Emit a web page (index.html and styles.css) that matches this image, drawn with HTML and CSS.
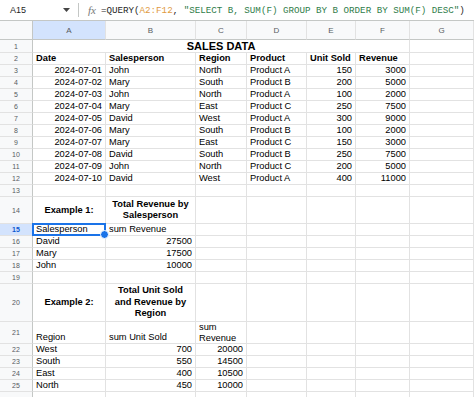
FILE: index.html
```html
<!DOCTYPE html>
<html lang="en">

<head>
  <meta charset="UTF-8" />
  <meta name="viewport" content="width=device-width, initial-scale=1.0" />
  <title>Sales Data - QUERY</title>
  <link rel="stylesheet" href="styles.css">
</head>

<body>
  <!-- Formula bar -->
  <div class="formula-bar">
    <span class="name-box">A15</span>
    <svg class="caret" width="7" height="4" viewBox="0 0 7 4"><path d="M0 0h7L3.5 4z" fill="#444" /></svg>
    <span class="divider"></span>
    <span class="fx">fx</span>
    <span class="formula">=QUERY(<span class="ref">A2:F12</span>, <span class="str">"SELECT B, SUM(F) GROUP BY B ORDER BY SUM(F) DESC"</span>)</span>
  </div>

  <!-- Grid -->
  <div class="sheet">
    <div class="corner"></div>
    <div class="head sel">A</div>
    <div class="head">B</div>
    <div class="head">C</div>
    <div class="head">D</div>
    <div class="head">E</div>
    <div class="head">F</div>
    <div class="head">G</div>

    <div class="rh">1</div>
    <div class="c title">SALES DATA</div>
    <div class="c"></div>

    <div class="rh">2</div>
    <div class="c b">Date</div>
    <div class="c b">Salesperson</div>
    <div class="c b">Region</div>
    <div class="c b">Product</div>
    <div class="c b">Unit Sold</div>
    <div class="c b">Revenue</div>
    <div class="c"></div>

    <div class="rh">3</div>
    <div class="c r">2024-07-01</div>
    <div class="c">John</div>
    <div class="c">North</div>
    <div class="c">Product A</div>
    <div class="c r">150</div>
    <div class="c r">3000</div>
    <div class="c"></div>

    <div class="rh">4</div>
    <div class="c r">2024-07-02</div>
    <div class="c">Mary</div>
    <div class="c">South</div>
    <div class="c">Product B</div>
    <div class="c r">200</div>
    <div class="c r">5000</div>
    <div class="c"></div>

    <div class="rh">5</div>
    <div class="c r">2024-07-03</div>
    <div class="c">John</div>
    <div class="c">North</div>
    <div class="c">Product A</div>
    <div class="c r">100</div>
    <div class="c r">2000</div>
    <div class="c"></div>

    <div class="rh">6</div>
    <div class="c r">2024-07-04</div>
    <div class="c">Mary</div>
    <div class="c">East</div>
    <div class="c">Product C</div>
    <div class="c r">250</div>
    <div class="c r">7500</div>
    <div class="c"></div>

    <div class="rh">7</div>
    <div class="c r">2024-07-05</div>
    <div class="c">David</div>
    <div class="c">West</div>
    <div class="c">Product A</div>
    <div class="c r">300</div>
    <div class="c r">9000</div>
    <div class="c"></div>

    <div class="rh">8</div>
    <div class="c r">2024-07-06</div>
    <div class="c">Mary</div>
    <div class="c">South</div>
    <div class="c">Product B</div>
    <div class="c r">100</div>
    <div class="c r">2000</div>
    <div class="c"></div>

    <div class="rh">9</div>
    <div class="c r">2024-07-07</div>
    <div class="c">Mary</div>
    <div class="c">East</div>
    <div class="c">Product C</div>
    <div class="c r">150</div>
    <div class="c r">3000</div>
    <div class="c"></div>

    <div class="rh">10</div>
    <div class="c r">2024-07-08</div>
    <div class="c">David</div>
    <div class="c">South</div>
    <div class="c">Product B</div>
    <div class="c r">250</div>
    <div class="c r">7500</div>
    <div class="c"></div>

    <div class="rh">11</div>
    <div class="c r">2024-07-09</div>
    <div class="c">John</div>
    <div class="c">North</div>
    <div class="c">Product C</div>
    <div class="c r">200</div>
    <div class="c r">5000</div>
    <div class="c"></div>

    <div class="rh">12</div>
    <div class="c r">2024-07-10</div>
    <div class="c">David</div>
    <div class="c">West</div>
    <div class="c">Product A</div>
    <div class="c r">400</div>
    <div class="c r">11000</div>
    <div class="c"></div>

    <div class="rh">13</div>
    <div class="c"></div>
    <div class="c"></div>
    <div class="c"></div>
    <div class="c"></div>
    <div class="c"></div>
    <div class="c"></div>
    <div class="c"></div>

    <!-- Example 1 -->
    <div class="rh">14</div>
    <div class="c b ctr mid">Example 1:</div>
    <div class="c b ctr mid wrap">Total Revenue by Salesperson</div>
    <div class="c"></div>
    <div class="c"></div>
    <div class="c"></div>
    <div class="c"></div>
    <div class="c"></div>

    <div class="rh sel">15</div>
    <div class="c active">Salesperson</div>
    <div class="c">sum Revenue</div>
    <div class="c"></div>
    <div class="c"></div>
    <div class="c"></div>
    <div class="c"></div>
    <div class="c"></div>

    <div class="rh">16</div>
    <div class="c">David</div>
    <div class="c r">27500</div>
    <div class="c"></div>
    <div class="c"></div>
    <div class="c"></div>
    <div class="c"></div>
    <div class="c"></div>

    <div class="rh">17</div>
    <div class="c">Mary</div>
    <div class="c r">17500</div>
    <div class="c"></div>
    <div class="c"></div>
    <div class="c"></div>
    <div class="c"></div>
    <div class="c"></div>

    <div class="rh">18</div>
    <div class="c">John</div>
    <div class="c r">10000</div>
    <div class="c"></div>
    <div class="c"></div>
    <div class="c"></div>
    <div class="c"></div>
    <div class="c"></div>

    <div class="rh">19</div>
    <div class="c"></div>
    <div class="c"></div>
    <div class="c"></div>
    <div class="c"></div>
    <div class="c"></div>
    <div class="c"></div>
    <div class="c"></div>

    <!-- Example 2 -->
    <div class="rh">20</div>
    <div class="c b ctr mid">Example 2:</div>
    <div class="c b ctr mid wrap">Total Unit Sold and Revenue by Region</div>
    <div class="c"></div>
    <div class="c"></div>
    <div class="c"></div>
    <div class="c"></div>
    <div class="c"></div>

    <div class="rh">21</div>
    <div class="c">Region</div>
    <div class="c">sum Unit Sold</div>
    <div class="c wrap tight">sum Revenue</div>
    <div class="c"></div>
    <div class="c"></div>
    <div class="c"></div>
    <div class="c"></div>

    <div class="rh">22</div>
    <div class="c">West</div>
    <div class="c r">700</div>
    <div class="c r">20000</div>
    <div class="c"></div>
    <div class="c"></div>
    <div class="c"></div>
    <div class="c"></div>

    <div class="rh">23</div>
    <div class="c">South</div>
    <div class="c r">550</div>
    <div class="c r">14500</div>
    <div class="c"></div>
    <div class="c"></div>
    <div class="c"></div>
    <div class="c"></div>

    <div class="rh">24</div>
    <div class="c">East</div>
    <div class="c r">400</div>
    <div class="c r">10500</div>
    <div class="c"></div>
    <div class="c"></div>
    <div class="c"></div>
    <div class="c"></div>

    <div class="rh">25</div>
    <div class="c">North</div>
    <div class="c r">450</div>
    <div class="c r">10000</div>
    <div class="c"></div>
    <div class="c"></div>
    <div class="c"></div>
    <div class="c"></div>

    <div class="rh"></div>
    <div class="c"></div>
    <div class="c"></div>
    <div class="c"></div>
    <div class="c"></div>
    <div class="c"></div>
    <div class="c"></div>
    <div class="c"></div>
  </div>
</body>

</html>
```

FILE: styles.css
```css
* {
  box-sizing: border-box;
}

body {
  margin: 0;
  overflow: hidden;
  font-family: "Liberation Sans", Arial, sans-serif;
  color: #000;
  background-color: #fff;
}

/* formula bar */
.formula-bar {
  display: flex;
  align-items: center;
  height: 21px;
  border-bottom: 1px solid #c4c7c5;
  background-color: #fff;
}

.name-box {
  width: 62px;
  padding-left: 10px;
  font-size: 9px;
  color: #1f1f1f;
}

.caret {
  margin-left: 1px;
}

.divider {
  width: 1px;
  height: 14px;
  margin-left: 8px;
  background-color: #c4c7c5;
}

.fx {
  margin-left: 9px;
  font-family: "Liberation Serif", serif;
  font-style: italic;
  font-size: 11px;
  color: #777;
}

.formula {
  margin-left: 5px;
  font-family: "Liberation Mono", monospace;
  font-size: 9.2px;
  color: #1f1f1f;
  white-space: nowrap;
}

.ref {
  color: #e09a3e;
}

.str {
  color: #2f7d4a;
}

/* grid */
.sheet {
  display: grid;
  grid-template-columns: 33px 73px 90px 51px 60px 49px 54px 64px;
  grid-template-rows: 19px 13px repeat(12, 12px) 27px repeat(5, 12px) 38px 22px repeat(6, 12px);
  font-size: 9.3px;
}

.c {
  display: flex;
  align-items: flex-end;
  padding: 0 3px;
  border-right: 1px solid #e2e2e2;
  border-bottom: 1px solid #e2e2e2;
  line-height: 11px;
  white-space: nowrap;
  overflow: hidden;
}

.r {
  justify-content: flex-end;
}

.ctr {
  justify-content: center;
  text-align: center;
}

.mid {
  align-items: center;
}

.b {
  font-weight: bold;
}

.wrap {
  white-space: normal;
  line-height: 11.5px;
}

.tight {
  line-height: 10.5px;
}

.title {
  grid-column: span 6;
  justify-content: center;
  align-items: center;
  font-size: 11px;
  font-weight: bold;
}

.corner,
.head,
.rh {
  display: flex;
  align-items: center;
  justify-content: center;
  background-color: #f8f9fa;
  color: #575b5f;
}

.corner {
  border-right: 1px solid #c4c7c5;
  border-bottom: 1px solid #c4c7c5;
}

.head {
  border-right: 1px solid #e2e2e2;
  border-bottom: 1px solid #c4c7c5;
  font-size: 8px;
}

.rh {
  border-right: 1px solid #c4c7c5;
  border-bottom: 1px solid #e2e2e2;
  font-size: 7px;
}

.sel {
  background-color: #d3e3fd;
}

.rh.sel {
  color: #0b57d0;
  font-weight: bold;
}

/* active cell A15 */
.active {
  position: relative;
  overflow: visible;
}

.active::before {
  content: "";
  position: absolute;
  top: -1px;
  left: -1px;
  right: -1px;
  bottom: -1px;
  border: 2px solid #1a73e8;
}

.active::after {
  content: "";
  position: absolute;
  right: -4px;
  bottom: -4px;
  width: 7px;
  height: 7px;
  border-radius: 50%;
  border: 1px solid #fff;
  background-color: #1a73e8;
}
```
